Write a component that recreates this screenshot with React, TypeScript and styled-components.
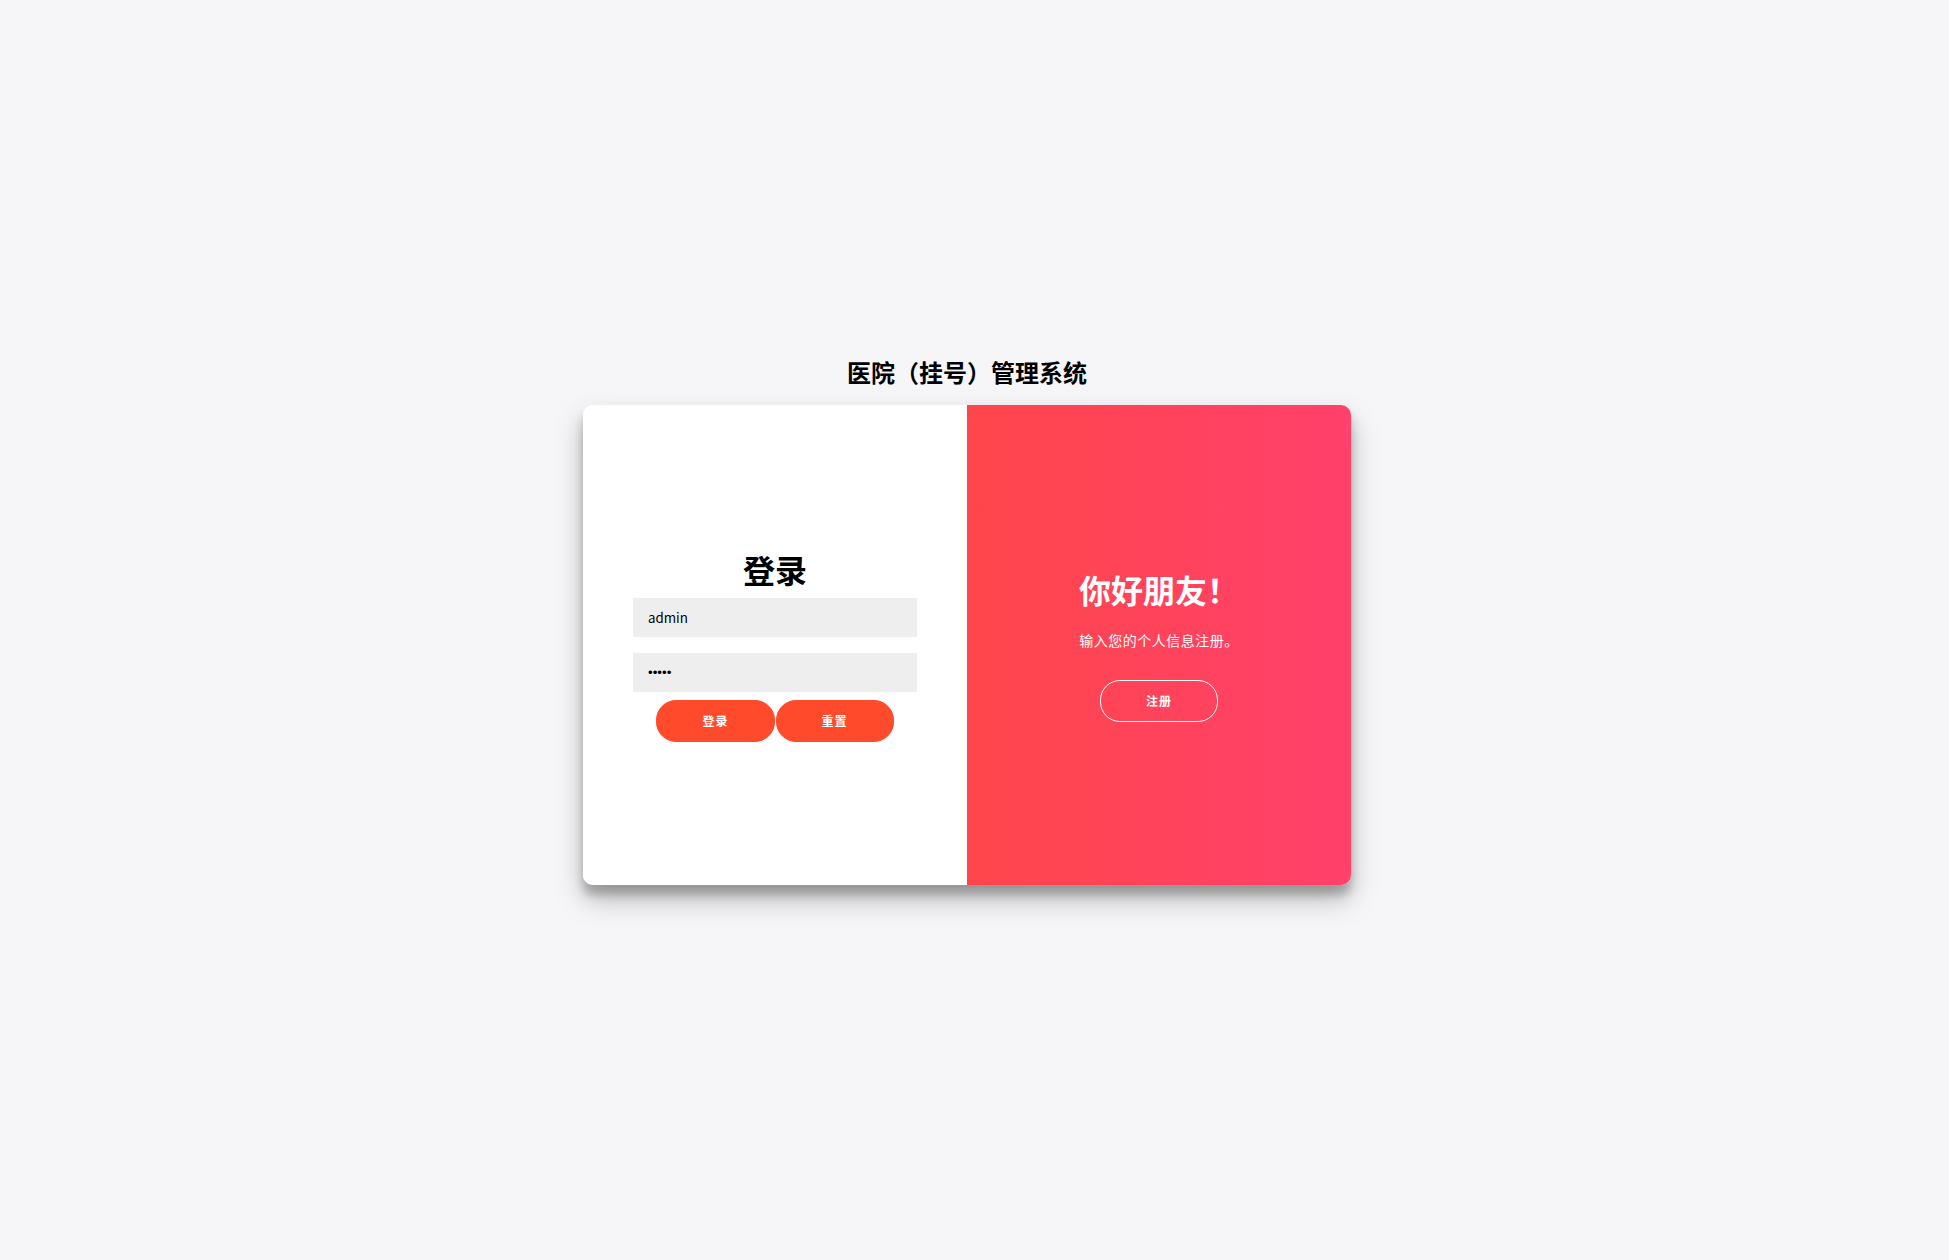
import styled, { createGlobalStyle } from 'styled-components'

const GlobalStyle = createGlobalStyle`
  html,
  body {
    margin: 0;
    padding: 0;
    background: #f6f5f7;
    font-family: 'Noto Sans CJK SC', 'Noto Sans', sans-serif;
  }

  * {
    box-sizing: border-box;
  }
`

// the right gutter stands in for the browser scrollbar of the original page
const Page = styled.main`
  min-height: 100vh;
  padding: 0 15px 22px 0;
  display: flex;
  flex-direction: column;
  align-items: center;
  justify-content: center;
`

const PageTitle = styled.h2`
  margin: 0 0 15px;
  font-size: 24px;
  line-height: 36px;
  font-weight: 700;
  color: #000;
`

const Card = styled.section`
  width: 768px;
  max-width: 100%;
  min-height: 480px;
  display: grid;
  grid-template-columns: 1fr 1fr;
  overflow: hidden;
  background: #fff;
  border-radius: 10px;
  box-shadow:
    0 14px 28px rgba(0, 0, 0, 0.25),
    0 10px 10px rgba(0, 0, 0, 0.22);
`

const Panel = styled.div<{ $accent?: boolean }>`
  display: flex;
  flex-direction: column;
  align-items: center;
  justify-content: center;
  text-align: center;
  padding: 0 ${({ $accent }) => ($accent ? '40px' : '50px')};
  color: ${({ $accent }) => ($accent ? '#fff' : '#000')};
  background: ${({ $accent }) =>
    $accent ? 'linear-gradient(to right, #ff464b, #ff416c)' : '#fff'};
`

const Heading = styled.h1`
  margin: 0;
  font-size: 32px;
  line-height: 42px;
  font-weight: 700;
`

const Field = styled.input<{ $secret?: boolean }>`
  width: 100%;
  height: 39px;
  margin: 8px 0;
  padding: 12px 15px;
  border: none;
  outline: none;
  background: #eee;
  color: #000;
  font-family: ${({ $secret }) =>
    $secret
      ? "'Liberation Sans', Arial, sans-serif"
      : "'Noto Sans CJK SC', 'Noto Sans', sans-serif"};
  font-size: 13.33px;
`

const ButtonRow = styled.div`
  display: flex;
  justify-content: center;
  gap: 1px;
`

const Button = styled.button<{ $ghost?: boolean }>`
  height: 42px;
  padding: 0 45px;
  border-radius: 20px;
  border: 1px solid ${({ $ghost }) => ($ghost ? '#fff' : '#ff4b2b')};
  background: ${({ $ghost }) => ($ghost ? 'transparent' : '#ff4b2b')};
  color: #fff;
  font-family: 'Noto Sans CJK SC', 'Noto Sans', sans-serif;
  font-size: 12px;
  line-height: 16px;
  font-weight: 700;
  letter-spacing: 1px;
  cursor: pointer;
`

const Text = styled.p`
  margin: 20px 0 30px;
  font-size: 14px;
  line-height: 20px;
  font-weight: 400;
  letter-spacing: 0.5px;
`

const App = () => {
  return (
    <>
      <GlobalStyle />
      <Page>
        <PageTitle>医院（挂号）管理系统</PageTitle>
        <Card>
          <Panel>
            <Heading>登录</Heading>
            <Field type="text" defaultValue="admin" />
            <Field $secret type="password" defaultValue="12345" />
            <ButtonRow>
              <Button>登录</Button>
              <Button>重置</Button>
            </ButtonRow>
          </Panel>
          <Panel $accent>
            <Heading>你好朋友！</Heading>
            <Text>输入您的个人信息注册。</Text>
            <Button $ghost>注册</Button>
          </Panel>
        </Card>
      </Page>
    </>
  )
}

export default App
